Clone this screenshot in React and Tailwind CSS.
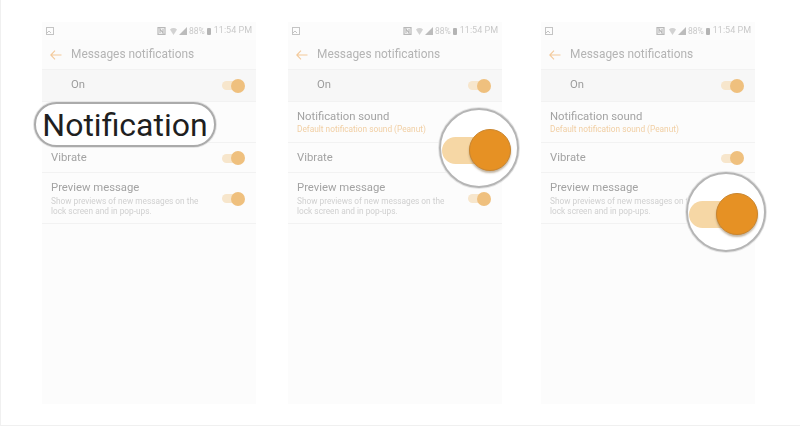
const font = { fontFamily: 'Roboto, sans-serif' }

function StatusBar() {
  return (
    <div className="h-[18px] flex items-center pl-[4px] pr-[4px] text-[8.5px] text-[#c9c9c9] blur-[0.4px]">
      <svg width="8" height="8" viewBox="0 0 8 8" fill="none" stroke="#c4c4c4" strokeWidth="1">
        <rect x="0.5" y="0.5" width="7" height="7" />
        <path d="M1 6l2-2 2 2" />
      </svg>
      <div className="ml-auto flex items-center gap-[2px]">
        <svg width="9" height="8" viewBox="0 0 9 8" fill="none" stroke="#b8b8b8" strokeWidth="1.2">
          <path d="M1 .7h7v6.6H1zM3 6V2l3 4V2" />
        </svg>
        <svg width="7" height="7" viewBox="0 0 7 7" className="ml-[2px]">
          <path d="M0 1.5a5 5 0 0 1 7 0L3.5 7z" fill="#d2d2d2" />
        </svg>
        <svg width="8" height="8" viewBox="0 0 8 8">
          <path d="M8 0v8H0z" fill="#bcbcbc" />
        </svg>
        <span>88%</span>
        <div className="w-[4px] h-[7px] bg-[#b4b4b4] rounded-[1px]" />
        <span className="text-[9px] ml-[1px]">11:54 PM</span>
      </div>
    </div>
  )
}

function Toggle() {
  return (
    <div className="relative w-[23px] h-[14px] flex items-center blur-[0.3px]">
      <div className="w-[18px] h-[9px] rounded-full bg-[#f7e6cc]" />
      <div className="absolute right-0 top-0 w-[14px] h-[14px] rounded-full bg-[#efc07e]" />
    </div>
  )
}

function Row({ title, sub, toggle, className = '' }) {
  return (
    <div className={`flex items-center justify-between pl-[9px] pr-[11px] border-b border-[#f2f2f2] ${className}`}>
      <div className="blur-[0.3px]">
        <div className="text-[11.3px] leading-[14px] text-[#a3a3a3]">{title}</div>
        {sub}
      </div>
      {toggle && <Toggle />}
    </div>
  )
}

function Magnifier({ className }) {
  return (
    <div className={`absolute w-[80px] h-[80px] rounded-full bg-white border-2 border-[#b5b5b5] shadow-[0_0_0_1px_#e5e5e5] overflow-hidden ${className}`}>
      <div className="absolute left-[1px] top-[27px] w-[60px] h-[27px] rounded-l-full bg-[#f6d7a5]" />
      <div className="absolute left-[28px] top-[19px] w-[42px] h-[42px] rounded-full bg-[#e69124] border border-[#c9852e] shadow-[0_2px_2px_rgba(120,90,50,0.45)]" />
    </div>
  )
}

function Panel({ children, soundHidden }) {
  return (
    <div className="relative w-[214px] h-[382px] bg-[#fcfcfc]">
      <StatusBar />
      <div className="h-[29px] flex items-center pl-[8px] bg-[#fbfbfb] blur-[0.3px]">
        <svg width="12" height="10" viewBox="0 0 12 10" fill="none" stroke="#f3c99a" strokeWidth="1.1">
          <path d="M11.5 5H1M5 .7L.8 5 5 9.3" />
        </svg>
        <span className="ml-[9px] text-[11.9px] text-[#b4b4b4]">Messages notifications</span>
      </div>
      <div className="h-[33px] flex items-center justify-between pl-[29px] pr-[11px] bg-[#f7f7f7] border-y border-[#f2f2f2]">
        <span className="text-[11.3px] text-[#9c9c9c] blur-[0.3px]">On</span>
        <Toggle />
      </div>
      <Row
        className="h-[41px] pt-[1px]"
        title={soundHidden ? '' : 'Notification sound'}
        sub={!soundHidden && <div className="text-[8.3px] leading-[11px] text-[#f1cfa4]">Default notification sound (Peanut)</div>}
      />
      <Row className="h-[30px] pt-[1px]" title="Vibrate" toggle />
      <Row
        className="h-[51px] pt-[1px]"
        title="Preview message"
        toggle
        sub={
          <div className="mt-[1px] w-[158px] text-[8.3px] leading-[10.5px] text-[#d0d0d0]">
            Show previews of new messages on the lock screen and in pop-ups.
          </div>
        }
      />
      {children}
    </div>
  )
}

export default function App() {
  return (
    <div style={font} className="relative w-[800px] h-[426px] overflow-hidden bg-white border-l border-b border-[#f0f0f0]">
      <div className="flex pl-[41px] pt-[22px] gap-[32px]">
        <Panel soundHidden>
          <div className="absolute -left-[8px] top-[80px] w-[182px] h-[45px] flex items-center justify-center rounded-full bg-white border-2 border-[#ababab] text-[32px] leading-none text-[#1f1f1f] shadow-[0_0_0_1px_#e5e5e5]">
            Notification
          </div>
        </Panel>
        <div className="w-[215px]">
          <Panel>
            <Magnifier className="left-[151px] top-[86px]" />
          </Panel>
        </div>
        <div className="ml-[6px]">
          <Panel>
            <Magnifier className="left-[145px] top-[150px]" />
          </Panel>
        </div>
      </div>
    </div>
  )
}
